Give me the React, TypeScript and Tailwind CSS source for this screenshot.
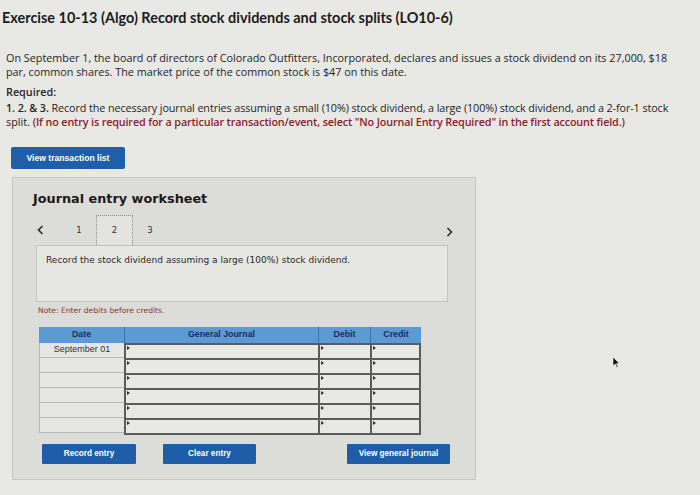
import React from "react";

const cols = "grid-cols-[85px_194px_52px_51px]";

const Marker = () => (
  <span className="absolute left-[1px] top-[1px] w-0 h-0 border-y-[2px] border-l-[3px] border-y-transparent border-l-[#2f2f2f]" />
);

const Chevron = ({ dir }: { dir: "left" | "right" }) => (
  <svg width="7" height="10" viewBox="0 0 7 10" className="block">
    <path
      d={dir === "left" ? "M5.5 1 L1.5 5 L5.5 9" : "M1.5 1 L5.5 5 L1.5 9"}
      fill="none"
      stroke="#2a2a2a"
      strokeWidth="1.6"
    />
  </svg>
);

const JournalRow = ({ date }: { date?: string }) => (
  <div className={`grid ${cols} h-[15px]`}>
    <div className="border-b border-l border-[#b9b9b6] bg-[#e6e6e3] flex items-center justify-center text-[9px] text-[#333] font-['Liberation_Sans',sans-serif]">
      {date}
    </div>
    <div className="relative border-l-2 border-t-2 border-[#5c5c5c] bg-[#e8e8e5]">
      <Marker />
    </div>
    <div className="relative border-l-2 border-t-2 border-[#5c5c5c] bg-[#e8e8e5]">
      <Marker />
    </div>
    <div className="relative border-x-2 border-t-2 border-[#5c5c5c] bg-[#e8e8e5]">
      <Marker />
    </div>
  </div>
);

const BlueButton = ({ label, className }: { label: string; className: string }) => (
  <div
    className={`h-[20px] bg-[#1e5ea8] rounded-[1px] flex items-center justify-center text-white font-bold text-[8.2px] font-['Liberation_Sans',sans-serif] ${className}`}
  >
    {label}
  </div>
);

export default function App() {
  return (
    <div className="relative w-[700px] h-[495px] overflow-hidden bg-[#e8e8e5] font-['Open_Sans',sans-serif] text-[#262626]">
      <h1 className="pl-[2px] pt-[9px] text-[14.45px] leading-[18px] font-bold text-[#1c1c1c] font-['Lato',sans-serif] whitespace-nowrap">
        Exercise 10-13 (Algo) Record stock dividends and stock splits (LO10-6)
      </h1>

      <p className="mt-[24px] pl-[6px] text-[10.8px] leading-[14px] whitespace-nowrap">
        On September 1, the board of directors of Colorado Outfitters, Incorporated, declares and issues a stock dividend on its 27,000, $18
        <br />
        par, common shares. The market price of the common stock is $47 on this date.
      </p>

      <p className="mt-[6px] pl-[6px] text-[10.8px] leading-[14px] font-semibold">Required:</p>
      <p className="mt-[2px] pl-[6px] text-[10.8px] leading-[14px] whitespace-nowrap">
        <span className="tracking-[-0.1px]">
          <span className="font-semibold">1. 2. &amp; 3.</span> Record the necessary journal entries assuming a small (10%) stock dividend, a large (100%) stock dividend, and a 2-for-1 stock
        </span>
        <br />
        split.{" "}
        <span className="font-semibold text-[#8c1d2c] tracking-[-0.15px]">
          (If no entry is required for a particular transaction/event, select "No Journal Entry Required" in the first account field.)
        </span>
      </p>

      <div className="mt-[18px] ml-[11px] w-[114px] h-[22px] bg-[#1f5fa9] rounded-[2px] flex items-center justify-center text-white font-bold text-[8.6px] font-['Liberation_Sans',sans-serif]">
        View transaction list
      </div>

      <div className="mt-[8px] ml-[12px] w-[464px] h-[303px] border border-[#c6c6c2] bg-[#dcdcd8] font-['DejaVu_Sans',sans-serif]">
        <h2 className="pl-[20px] pt-[13px] text-[12.8px] leading-[16px] font-bold text-[#1a1a1a]">
          Journal entry worksheet
        </h2>

        <div className="mt-[8px] flex items-center h-[30px] text-[8.5px] text-[#333]">
          <div className="ml-[24px] w-[7px]">
            <Chevron dir="left" />
          </div>
          <div className="ml-[30px] w-[10px] text-center">1</div>
          <div className="ml-[12px] w-[37px] h-[30px] border border-dotted border-b-0 border-[#8a8a86] bg-[#e3e3e0] flex items-center justify-center">
            2
          </div>
          <div className="ml-[12px] w-[10px] text-center">3</div>
          <div className="ml-auto mr-[22px] w-[7px] mt-[3px]">
            <Chevron dir="right" />
          </div>
        </div>

        <div className="ml-[23px] w-[412px] h-[57px] border border-[#c3c3bf] bg-[#e6e6e3] pl-[9px] pt-[9px] text-[9px] leading-[11px] text-[#2a2a2a]">
          Record the stock dividend assuming a large (100%) stock dividend.
        </div>

        <p className="mt-[4px] ml-[25px] text-[7.6px] leading-[10px] text-[#8a3a3a]">
          Note: Enter debits before credits.
        </p>

        <div className="mt-[11px] ml-[26px] w-[382px] font-['Liberation_Sans',sans-serif]">
          <div className={`grid ${cols} h-[16px] bg-[#5c9ad7] text-[8.8px] font-bold text-[#15305c]`}>
            <div className="flex items-center justify-center">Date</div>
            <div className="flex items-center justify-center border-l border-[#3f72ad]">General Journal</div>
            <div className="flex items-center justify-center border-l border-[#3f72ad]">Debit</div>
            <div className="flex items-center justify-center border-l border-[#3f72ad]">Credit</div>
          </div>
          <JournalRow date="September 01" />
          <JournalRow />
          <JournalRow />
          <JournalRow />
          <JournalRow />
          <JournalRow />
          <div className={`grid ${cols} h-[2px]`}>
            <div />
            <div className="col-span-3 bg-[#5c5c5c]" />
          </div>
        </div>

        <div className="mt-[9px] flex">
          <BlueButton label="Record entry" className="ml-[29px] w-[94px]" />
          <BlueButton label="Clear entry" className="ml-[27px] w-[93px]" />
          <BlueButton label="View general journal" className="ml-[91px] w-[103px]" />
        </div>
      </div>

      <svg className="absolute left-[612px] top-[356px]" width="8" height="12" viewBox="0 0 8 12">
        <path d="M1 1 L1 10 L3.2 8 L4.8 11.4 L6 10.8 L4.5 7.6 L7.4 7.6 Z" fill="#111" stroke="#fff" strokeWidth="0.6" />
      </svg>
    </div>
  );
}
